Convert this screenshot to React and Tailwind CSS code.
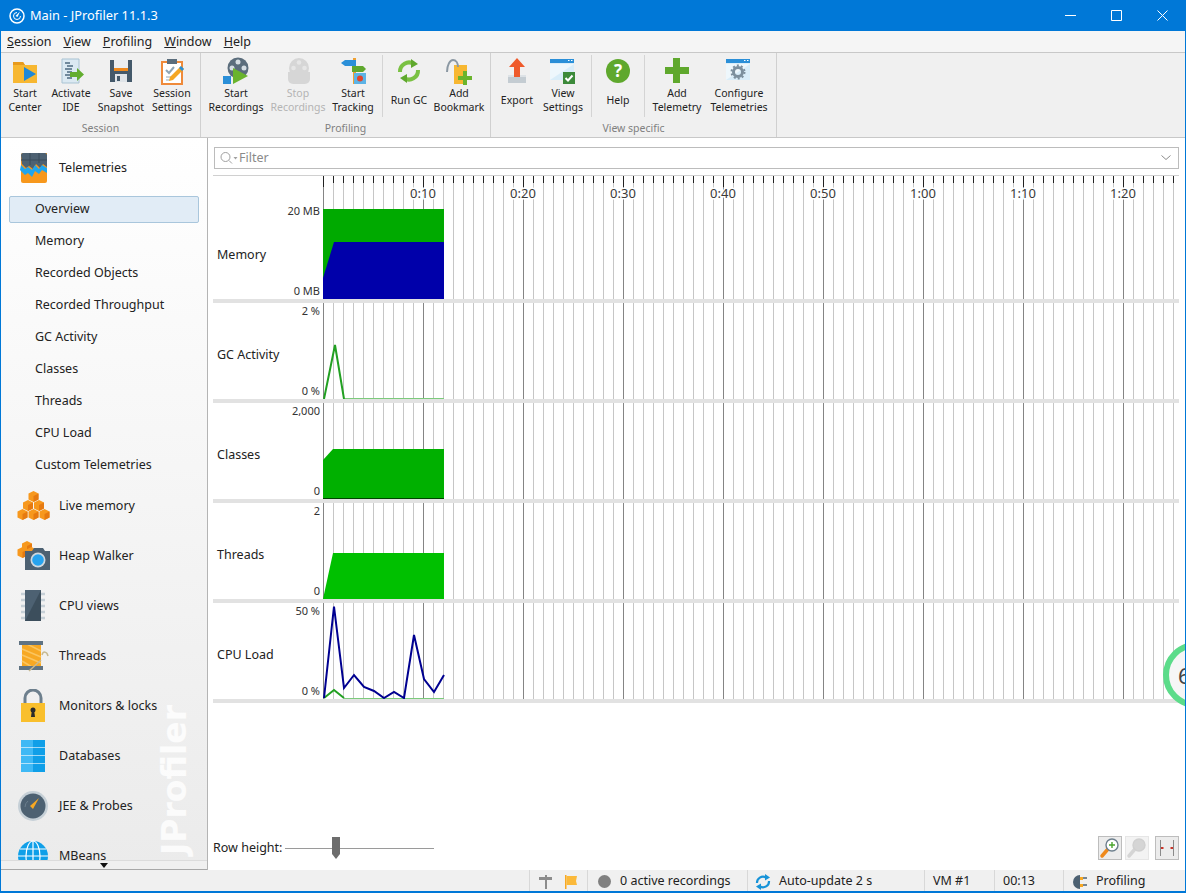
import React from 'react';

const FONT = '"Noto Sans", "Liberation Sans", sans-serif';

/* toolbar icons */
const StartCenterIcon = () => (
  <svg width="28" height="28" viewBox="0 0 28 28">
    <path d="M2 5h10l2 3h12v18H2z" fill="#f7b731" />
    <path d="M2 5h10l2 3H2z" fill="#e89a1c" />
    <path d="M13 10v14l12-7z" fill="#1e88d8" />
  </svg>
);
const ActivateIdeIcon = () => (
  <svg width="28" height="28" viewBox="0 0 28 28">
    <path d="M5 2h17v24H5z" fill="#dbe9f2" stroke="#a9c3d3" />
    <path d="M8 6h5M10 9h6M8 12h7M10 15h5M8 18h6M10 21h5" stroke="#4d6a80" strokeWidth="1.6" />
    <path d="M13 15h7v-4l7 6.500-7 6.500v-4h-7z" fill="#62ad2f" />
  </svg>
);
const SaveIcon = () => (
  <svg width="28" height="28" viewBox="0 0 28 28">
    <path d="M3 3h22v22H3z" fill="#44596a" />
    <path d="M7 3h14v11H7z" fill="#e9edf0" />
    <path d="M7 11h14v3H7z" fill="#ef8a1d" />
    <path d="M8 17h12v8H8z" fill="#dfe4e8" />
    <path d="M10 19h3v5h-3z" fill="#44596a" />
  </svg>
);
const SessionSettingsIcon = () => (
  <svg width="28" height="28" viewBox="0 0 28 28">
    <path d="M4 5h20v22H4z" fill="#fff" stroke="#ef8a3a" strokeWidth="2" />
    <path d="M9 2h10v5H9z" fill="#5b6d7c" />
    <path d="M8 13l3 3 5-6" fill="none" stroke="#8fa5b5" strokeWidth="2" />
    <path d="M8 20h7M8 23h4" stroke="#b9c6d0" strokeWidth="1.500" />
    <path d="M23 9l3 3-11 11-4 1 1-4z" fill="#f5a623" />
    <path d="M23 9l3 3-2 2-3-3z" fill="#2a8fd8" />
  </svg>
);
const StartRecIcon = () => (
  <svg width="28" height="28" viewBox="0 0 28 28">
    <circle cx="16" cy="11" r="10.500" fill="#5b6d7c" />
    <circle cx="16" cy="5" r="2.500" fill="#d5dde3" />
    <circle cx="10" cy="11" r="2.500" fill="#d5dde3" />
    <circle cx="22" cy="11" r="2.500" fill="#d5dde3" />
    <circle cx="16" cy="17" r="2.500" fill="#d5dde3" />
    <path d="M1 19h8v8H1z" fill="#2a8fd8" />
    <path d="M11 11v16l15-8z" fill="#6ab42d" />
  </svg>
);
const StopRecIcon = () => (
  <svg width="28" height="28" viewBox="0 0 28 28">
    <circle cx="15" cy="11" r="10" fill="#d6d6d6" />
    <circle cx="15" cy="5.500" r="2.300" fill="#e6e6e6" />
    <circle cx="9.500" cy="11" r="2.300" fill="#e6e6e6" />
    <circle cx="20.500" cy="11" r="2.300" fill="#e6e6e6" />
    <path d="M4 15h22v7a5 5 0 0 1-5 5H9a5 5 0 0 1-5-5z" fill="#d6d6d6" />
  </svg>
);
const TrackingIcon = () => (
  <svg width="28" height="28" viewBox="0 0 28 28">
    <path d="M14 1h3v26h-3z" fill="#f0a030" />
    <path d="M2 6l4-3h11v6H6z" fill="#2a8fd8" />
    <path d="M13 9h11l3 3-3 3H13z" fill="#5fa82d" />
    <path d="M15 16h12v11H15z" fill="#5cb3e6" />
    <circle cx="21" cy="21.500" r="3" fill="#e0452c" />
  </svg>
);
const RunGcIcon = () => (
  <svg width="28" height="28" viewBox="0 0 28 28">
    <path d="M5 15a9 9 0 0 1 14-8" fill="none" stroke="#7ac142" strokeWidth="4" />
    <path d="M16 2l7 5-7 4z" fill="#5fa82d" />
    <path d="M23 13a9 9 0 0 1-14 8" fill="none" stroke="#7ac142" strokeWidth="4" />
    <path d="M12 26l-7-5 7-4z" fill="#5fa82d" />
  </svg>
);
const BookmarkIcon = () => (
  <svg width="28" height="28" viewBox="0 0 28 28">
    <path d="M9 8h13v19H9z" fill="#f7b731" />
    <path d="M2 15c0-7 3-12 6-12s5 3 5 7" fill="none" stroke="#8b98a3" strokeWidth="2" />
    <path d="M18 14h4v5h5v4h-5v5h-4v-5h-5v-4h5z" fill="#6ab42d" />
  </svg>
);
const ExportIcon = () => (
  <svg width="28" height="28" viewBox="0 0 28 28">
    <path d="M5 18h18v8H5z" fill="#c4ccd2" />
    <path d="M5 18h18v2H5z" fill="#dde2e6" />
    <path d="M14 1l8 9h-5v10h-6V10H6z" fill="#ef5a2b" />
  </svg>
);
const WindowBase = ({ children }) => (
  <svg width="28" height="28" viewBox="0 0 28 28">
    <path d="M1 2h24v21H1z" fill="#d9edf9" />
    <path d="M1 7L25 7 1 23z" fill="#eef7fc" />
    <path d="M1 2h24v4H1z" fill="#2a8fd8" />
    <path d="M19 3.500h1.500M22 3.500h1.500" stroke="#fff" />
    {children}
  </svg>
);
const ViewSettingsIcon = () => (
  <WindowBase>
    <path d="M14 15h12v12H14z" fill="#3c8a3a" />
    <path d="M16.500 21l2.500 2.500 4.500-5" fill="none" stroke="#fff" strokeWidth="2" />
  </WindowBase>
);
const HelpIcon = () => (
  <svg width="28" height="28" viewBox="0 0 28 28">
    <circle cx="14" cy="14" r="12" fill="#5fa82d" />
    <text x="14" y="20" textAnchor="middle" fontSize="17" fontWeight="700" fill="#fff" fontFamily={FONT}>?</text>
  </svg>
);
const PlusIcon = () => (
  <svg width="28" height="28" viewBox="0 0 28 28">
    <path d="M11 2h7v9h9v7h-9v9h-7v-9H3v-7h8z" fill="#5fa82d" transform="translate(-1 -1)" />
  </svg>
);
const ConfigureIcon = () => (
  <WindowBase>
    <circle cx="13" cy="15" r="4.500" fill="none" stroke="#7c8f9d" strokeWidth="3" />
    <circle cx="13" cy="15" r="6.500" fill="none" stroke="#7c8f9d" strokeWidth="2" strokeDasharray="2 2.100" />
  </WindowBase>
);

/* sidebar icons */
const TelemetriesIcon = () => (
  <svg width="32" height="32" viewBox="0 0 32 32">
    <path d="M3 3a2 2 0 0 1 2-2h24v28a2 2 0 0 1-2 2H5a2 2 0 0 1-2-2z" fill="#f7981d" />
    <path d="M3 3a2 2 0 0 1 2-2h22a2 2 0 0 1 2 2v12l-4-3-3 4-4-4-3 5-4-3-3 2-4-4z" fill="#4d6172" />
    <path d="M3 13l4 4 3-2 4 3 3-5 4 4 3-4 5 3v5l-5-3-3 4-4-3-3 6-4-4-3 2-5-5z" fill="#1fa5ee" />
    <path d="M12 1v12M21 1v10M3 8h26" stroke="#3b4c5a" strokeWidth="1" />
  </svg>
);
const Cube = ({ x, y }) => (
  <g transform={`translate(${x} ${y})`}>
    <path d="M5 0l5 2.500v6L5 11 0 8.500v-6z" fill="#f7981d" />
    <path d="M5 5l5-2.500v6L5 11z" fill="#e67a10" />
  </g>
);
const CubesIcon = () => (
  <svg width="34" height="32" viewBox="0 0 34 32">
    <Cube x="11.500" y="1" />
    <Cube x="6" y="10" />
    <Cube x="17" y="10" />
    <Cube x="0.500" y="19" />
    <Cube x="11.500" y="19" />
    <Cube x="22.500" y="19" />
  </svg>
);
const CameraIcon = () => (
  <svg width="34" height="32" viewBox="0 0 34 32">
    <Cube x="0.500" y="7" />
    <Cube x="5" y="1" />
    <Cube x="9.500" y="7" />
    <path d="M8 11h7l2-3h9l2 3h5v19H8z" fill="#4d6172" />
    <circle cx="21" cy="20" r="7.500" fill="#cfd8df" />
    <circle cx="21" cy="20" r="5.800" fill="#27a3ee" />
  </svg>
);
const ChipIcon = () => (
  <svg width="32" height="34" viewBox="0 0 32 34">
    <path d="M4 5h24M4 11h24M4 17h24M4 23h24M4 29h24" stroke="#c6d0d7" strokeWidth="2.500" />
    <path d="M8 1h16v31H8z" fill="#4d6172" />
    <path d="M24 1v31H8z" fill="#3c4e5c" />
  </svg>
);
const SpoolIcon = () => (
  <svg width="32" height="32" viewBox="0 0 32 32">
    <path d="M5 4h19v24H5z" fill="#f7a823" />
    <path d="M5 9l19 8M5 15l19 8M5 21l10 6M10 4l14 7" stroke="#fbc55f" strokeWidth="1.500" />
    <path d="M2 1h24v4H2zM2 26h24v4H2z" fill="#5f7383" />
    <path d="M31 16c-1-5-5-5-6-1M24 20L12 31" fill="none" stroke="#c7b990" strokeWidth="1.500" />
  </svg>
);
const LockIcon = () => (
  <svg width="32" height="34" viewBox="0 0 32 34">
    <path d="M8 15V9a8 8 0 0 1 16 0v6" fill="none" stroke="#6d7f8d" strokeWidth="3" />
    <path d="M4 14h24v19H4z" fill="#f9bf2c" />
    <circle cx="16" cy="21" r="2.500" fill="#2b2b2b" />
    <path d="M14.800 22h2.400l.8 6h-4z" fill="#2b2b2b" />
  </svg>
);
const DatabaseIcon = () => (
  <svg width="32" height="32" viewBox="0 0 32 32">
    <path d="M4 0h24v32H4z" fill="#0f9fe8" />
    <path d="M4 0h12v32H4z" fill="#3fb9f5" />
    <path d="M4 7.500h24M4 15.500h24M4 23.500h24" stroke="#fff" strokeWidth="1" opacity="0.600" />
  </svg>
);
const GaugeIcon = () => (
  <svg width="32" height="32" viewBox="0 0 32 32">
    <circle cx="16" cy="16" r="15" fill="#c6d0d7" />
    <circle cx="16" cy="16" r="12.500" fill="#4d6172" />
    <path d="M22 8l-6 11-3-3z" fill="#f7a823" />
    <path d="M8 17a8 8 0 0 1 3-6" fill="none" stroke="#6c7f8e" strokeWidth="1" />
  </svg>
);
const GlobeIcon = () => (
  <svg width="32" height="32" viewBox="0 0 32 32">
    <circle cx="16" cy="16" r="15" fill="#0f9fe8" />
    <path d="M1 16h30M3 9h26M3 23h26M16 1v30" stroke="#fff" strokeWidth="1.200" />
    <ellipse cx="16" cy="16" rx="7" ry="15" fill="none" stroke="#fff" strokeWidth="1.200" />
  </svg>
);

/* small status bar + zoom icons */
const SignpostSmall = () => (
  <svg width="16" height="16" viewBox="0 0 16 16">
    <path d="M7 1h2v14H7z" fill="#8c8c8c" />
    <path d="M1 3h13v3H1z" fill="#8c8c8c" />
  </svg>
);
const FlagSmall = () => (
  <svg width="16" height="16" viewBox="0 0 16 16">
    <path d="M2 1h1.500v14H2z" fill="#f7a823" />
    <path d="M3.500 2H14l-1 5 1 4H3.500z" fill="#fbb93a" />
  </svg>
);
const RefreshSmall = () => (
  <svg width="18" height="18" viewBox="0 0 18 18">
    <path d="M3 10a6 6 0 0 1 9-5.500" fill="none" stroke="#1793d8" strokeWidth="2.200" />
    <path d="M11 1l5 3.500-5 3z" fill="#1793d8" />
    <path d="M15 8a6 6 0 0 1-9 5.500" fill="none" stroke="#1793d8" strokeWidth="2.200" />
    <path d="M7 17l-5-3.500 5-3z" fill="#1793d8" />
  </svg>
);
const PlugSmall = () => (
  <svg width="18" height="16" viewBox="0 0 18 16">
    <path d="M9 1a7 7 0 0 0 0 14z" fill="#4d6172" />
    <path d="M9 3h3v3H9z M9 10h3v3H9z" fill="#f7a823" />
    <path d="M12 4h4M12 11h4" stroke="#4d6172" strokeWidth="1.500" />
  </svg>
);
const ZoomInIcon = ({ dim }) => (
  <svg width="22" height="22" viewBox="0 0 22 22">
    <path d="M9 12L3 19" stroke={dim ? '#d5d5d5' : '#ef8a1d'} strokeWidth="3.500" strokeLinecap="round" />
    <circle cx="13" cy="8" r="6" fill={dim ? '#d5d5d5' : '#fff'} stroke={dim ? '#d0d0d0' : '#6d7f8d'} strokeWidth="1.400" />
    {!dim && <path d="M10 8h6M13 5v6" stroke="#4aa52e" strokeWidth="1.400" />}
  </svg>
);
const FitIcon = () => (
  <svg width="22" height="22" viewBox="0 0 22 22">
    <path d="M4.500 3v16M17.500 3v16" stroke="#8a8a8a" />
    <path d="M5 11h2.500M14.500 11h2.500" stroke="#c9362b" strokeWidth="2" />
  </svg>
);

const Separator = ({ className }) => <div className={`w-px bg-[#d4d4d4] ${className}`} />;

const ToolButton = ({ width, lines, icon, disabled }) => (
  <div className={`flex flex-col items-center pt-[4px] ${width}`}>
    {icon}
    <div className={`mt-[1px] h-[28px] flex flex-col justify-center items-center text-[10.5px] leading-[14px] whitespace-nowrap ${disabled ? 'text-[#b4b4b4]' : 'text-[#222]'}`}>
      {lines.map(line => <span key={line}>{line}</span>)}
    </div>
  </div>
);

const ToolGroup = ({ label, width, className, children }) => (
  <div className={`flex flex-col h-full border-r border-[#d0d0d0] ${width}`}>
    <div className={`flex h-[64px] ${className}`}>{children}</div>
    <div className="flex-1 pt-[4px] flex items-center justify-center text-[10.5px] text-[#808080]">{label}</div>
  </div>
);

const MENUS = ['Session', 'View', 'Profiling', 'Window', 'Help'];

const TELEMETRY_ITEMS = ['Overview', 'Memory', 'Recorded Objects', 'Recorded Throughput', 'GC Activity', 'Classes', 'Threads', 'CPU Load', 'Custom Telemetries'];

const SECTIONS = [
  { name: 'Live memory', icon: <CubesIcon /> },
  { name: 'Heap Walker', icon: <CameraIcon /> },
  { name: 'CPU views', icon: <ChipIcon /> },
  { name: 'Threads', icon: <SpoolIcon /> },
  { name: 'Monitors & locks', icon: <LockIcon /> },
  { name: 'Databases', icon: <DatabaseIcon /> },
  { name: 'JEE & Probes', icon: <GaugeIcon /> },
  { name: 'MBeans', icon: <GlobeIcon /> },
];

const Sidebar = () => (
  <div className="relative w-[207px] flex flex-col border-r border-[#b4b4b4] bg-gradient-to-b from-white to-[#ebebeb]">
    <div className="flex-1 overflow-hidden">
      <div className="h-[54px] pt-[6px] pl-[17px] flex items-center gap-[9px]">
        <TelemetriesIcon />
        <span>Telemetries</span>
      </div>
      {TELEMETRY_ITEMS.map((item, i) => (
        <div key={item} className="h-[32px] pt-[2px] flex items-center">
          {i === 0 ? (
            <div className="ml-[8px] w-[190px] h-[27px] pl-[25px] flex items-center bg-[#e1ecf6] border border-[#a9c6dc] rounded-[2px]">{item}</div>
          ) : (
            <span className="pl-[34px]">{item}</span>
          )}
        </div>
      ))}
      {SECTIONS.map(section => (
        <div key={section.name} className="h-[50px] pt-[2px] flex items-center">
          <div className="w-[58px] pl-[16px] flex items-center">{section.icon}</div>
          <span>{section.name}</span>
        </div>
      ))}
    </div>
    <div className="h-[10px] flex justify-center bg-[#f0f0f0] border-t border-b border-[#dcdcdc] border-b-[#a8a8a8]">
      <svg width="10" height="8" viewBox="0 0 10 8"><path d="M1 2h8L5 7z" fill="#111" /></svg>
    </div>
    <div className="absolute left-[84px] top-[622px] w-[180px] h-[40px] rotate-[-90deg] flex items-center justify-center font-['DejaVu_Sans'] text-[33px] leading-[40px] font-bold text-white/80 select-none whitespace-nowrap">JProfiler</div>
  </div>
);

const GRID_X = Array.from({ length: 86 }, (_, i) => i * 10);

const GridLines = ({ height }) => (
  <>
    {GRID_X.map(x => (
      <line key={x} x1={x + 0.5} x2={x + 0.5} y1="0" y2={height} stroke={x % 100 === 0 ? '#858585' : '#c6c6c6'} />
    ))}
  </>
);

const Ruler = () => (
  <svg width="856" height="27" className="block">
    <GridLines height={27} />
    {GRID_X.map(x => (
      <line key={x} x1={x + 0.5} x2={x + 0.5} y1="0" y2={x % 100 === 0 ? 11 : 7} stroke="#222" />
    ))}
    {GRID_X.filter(x => x > 0 && x % 100 === 0).map(x => (
      <text key={x} x={x} y="21.500" textAnchor="middle" fontSize="13" fill="#3a3a3a" stroke="#fff" strokeWidth="3" paintOrder="stroke" fontFamily={FONT}>
        {`${Math.floor(x / 600)}:${String((x / 10) % 60).padStart(2, '0')}`}
      </text>
    ))}
  </svg>
);

const TelemetryRow = ({ name, top, bottom, children }) => (
  <div className="flex flex-col">
    <div className="flex h-[96px]">
      <div className="relative w-[110px] flex items-center pt-[8px] pl-[4px]">
        <span>{name}</span>
        <span className="absolute right-[3px] top-0 text-[11px] leading-[16px] text-[#333]">{top}</span>
        <span className="absolute right-[3px] bottom-0 text-[11px] leading-[16px] text-[#333]">{bottom}</span>
      </div>
      <svg width="856" height="96" className="block">
        <GridLines height={96} />
        {children}
      </svg>
    </div>
    <div className="h-[4px] bg-[#e2e2e2]" />
  </div>
);

const StatusCell = ({ width, children }) => (
  <div className={`h-full pt-[2px] flex items-center border-l border-[#d8d8d8] ${width}`}>{children}</div>
);

const App = () => (
  <div className="w-screen h-screen overflow-hidden flex flex-col relative bg-white text-[12.5px] text-[#222] border-x border-b-2 border-[#0078d7]" style={{ fontFamily: FONT }}>
    {/* Title bar */}
    <div className="h-[31px] shrink-0 bg-[#0078d7] flex items-center text-white -mx-px">
      <svg width="16" height="16" viewBox="0 0 16 16" className="ml-[9px]">
        <circle cx="8" cy="8" r="7" fill="none" stroke="#fff" strokeWidth="1.500" />
        <path d="M11 3.500L8.500 9 6.500 8z" fill="#fff" />
        <path d="M8 4.500a3.500 3.500 0 1 0 3.500 3.500" fill="none" stroke="#fff" />
      </svg>
      <span className="ml-[5px] text-[12.8px]">Main - JProfiler 11.1.3</span>
      <div className="ml-auto mr-[1px] flex items-center">
        <div className="w-[46px] flex justify-center">
          <svg width="11" height="11" viewBox="0 0 11 11"><path d="M0 5.500h11" stroke="#fff" /></svg>
        </div>
        <div className="w-[46px] flex justify-center">
          <svg width="11" height="11" viewBox="0 0 11 11"><path d="M.5.500h10v10H.5z" fill="none" stroke="#fff" /></svg>
        </div>
        <div className="w-[46px] flex justify-center">
          <svg width="11" height="11" viewBox="0 0 11 11"><path d="M.5.500l10 10M10.500.500l-10 10" stroke="#fff" /></svg>
        </div>
      </div>
    </div>

    {/* Menu bar */}
    <div className="h-[22px] shrink-0 flex items-center gap-[12px] pl-[6px] pt-px bg-[#f5f5f5] border-b border-[#c8c8c8]">
      {MENUS.map(menu => (
        <span key={menu}><span className="underline">{menu[0]}</span>{menu.slice(1)}</span>
      ))}
    </div>

    {/* Toolbar */}
    <div className="h-[85px] shrink-0 flex bg-[#f0f0f0] border-b border-[#c8c8c8]">
      <ToolGroup label="Session" width="w-[200px]" className="pl-[2px]">
        <ToolButton width="w-[44px]" lines={['Start', 'Center']} icon={<StartCenterIcon />} />
        <ToolButton width="w-[48px]" lines={['Activate', 'IDE']} icon={<ActivateIdeIcon />} />
        <ToolButton width="w-[52px]" lines={['Save', 'Snapshot']} icon={<SaveIcon />} />
        <ToolButton width="w-[50px]" lines={['Session', 'Settings']} icon={<SessionSettingsIcon />} />
      </ToolGroup>
      <ToolGroup label="Profiling" width="w-[290px]" className="pl-[5px]">
        <ToolButton width="w-[60px]" lines={['Start', 'Recordings']} icon={<StartRecIcon />} />
        <ToolButton width="w-[64px]" lines={['Stop', 'Recordings']} icon={<StopRecIcon />} disabled />
        <ToolButton width="w-[46px]" lines={['Start', 'Tracking']} icon={<TrackingIcon />} />
        <Separator className="ml-[6px] mr-[5px] h-[62px] mt-[2px]" />
        <ToolButton width="w-[42px]" lines={['Run GC']} icon={<RunGcIcon />} />
        <ToolButton width="w-[58px]" lines={['Add', 'Bookmark']} icon={<BookmarkIcon />} />
      </ToolGroup>
      <ToolGroup label="View specific" width="w-[286px]" className="pl-[6px]">
        <ToolButton width="w-[40px]" lines={['Export']} icon={<ExportIcon />} />
        <ToolButton width="w-[52px]" lines={['View', 'Settings']} icon={<ViewSettingsIcon />} />
        <Separator className="ml-[2px] mr-[1px] h-[62px] mt-[2px]" />
        <ToolButton width="w-[50px]" lines={['Help']} icon={<HelpIcon />} />
        <Separator className="mx-[1px] h-[62px] mt-[2px]" />
        <ToolButton width="w-[62px]" lines={['Add', 'Telemetry']} icon={<PlusIcon />} />
        <ToolButton width="w-[62px]" lines={['Configure', 'Telemetries']} icon={<ConfigureIcon />} />
      </ToolGroup>
    </div>

    {/* Body */}
    <div className="flex-1 min-h-0 flex">
      <Sidebar />
      <div className="flex-1 min-w-0 flex flex-col pl-[5px] pr-[6px] pt-[9px] pb-[10px]">
        <div className="ml-px h-[22px] shrink-0 flex items-center px-[4px] border border-[#bcbcbc]">
          <svg width="20" height="14" viewBox="0 0 20 14">
            <circle cx="6.500" cy="6" r="4.500" fill="none" stroke="#a0a0a0" />
            <path d="M10 9.500l3 3" stroke="#a0a0a0" />
            <path d="M14.500 6h4l-2 2.500z" fill="#a0a0a0" />
          </svg>
          <span className="text-[#8a8a8a]">Filter</span>
          <svg width="12" height="8" viewBox="0 0 12 8" className="ml-auto mr-[2px]"><path d="M1.500 1.500l4.500 4 4.500-4" fill="none" stroke="#8c8c8c" /></svg>
        </div>
        <div className="mt-[6px] shrink-0 border-t border-[#d0d0d0] flex pl-[110px]">
          <Ruler />
        </div>
        <div className="shrink-0">
          <TelemetryRow name="Memory" top="20 MB" bottom="0 MB">
            <path d="M0 6H121V96H0z" fill="#00aa00" />
            <path d="M0 75L11 39H121V96H0z" fill="#0000aa" />
          </TelemetryRow>
          <TelemetryRow name="GC Activity" top="2 %" bottom="0 %">
            <path d="M121 95.500H21" stroke="#7ccb7c" fill="none" />
            <path d="M1 96L12 42 21 96" stroke="#22a022" strokeWidth="2" fill="none" />
          </TelemetryRow>
          <TelemetryRow name="Classes" top="2,000" bottom="0">
            <path d="M0 57L10 46H121V95H0z" fill="#00b000" />
            <path d="M0 95.500H121" stroke="#004400" />
          </TelemetryRow>
          <TelemetryRow name="Threads" top="2" bottom="0">
            <path d="M0 96L10 50H121V96z" fill="#00c000" />
          </TelemetryRow>
          <TelemetryRow name="CPU Load" top="50 %" bottom="0 %">
            <path d="M21 95.500H121" stroke="#7ccb7c" fill="none" />
            <path d="M1 95L11 87 21 95" stroke="#22a022" strokeWidth="2" fill="none" />
            <path d="M1 95L11 3.500 21 85 31 72 41 84 51 88 61 95 71 89 81 95 91 32 101 76 111 89 121 72" stroke="#000090" strokeWidth="2" fill="none" />
          </TelemetryRow>
        </div>
        <div className="mt-auto h-[24px] shrink-0 flex items-center">
          <span>Row height:</span>
          <div className="relative ml-[3px] w-[149px] h-px bg-[#9a9a9a]">
            <svg width="10" height="22" viewBox="0 0 10 22" className="absolute left-[46px] top-[-11px]">
              <path d="M1 0h8v17l-4 5-4-5z" fill="#6d6d6d" />
            </svg>
          </div>
          <div className="ml-auto flex items-center">
            <div className="w-[24px] h-[24px] flex items-center justify-center bg-[#ececec] border border-[#bdbdbd]"><ZoomInIcon /></div>
            <div className="ml-[3px] w-[24px] h-[24px] flex items-center justify-center bg-[#f3f3f3] border border-[#e6e6e6]"><ZoomInIcon dim /></div>
            <div className="ml-[6px] w-[24px] h-[24px] flex items-center justify-center bg-[#ececec] border border-[#bdbdbd]"><FitIcon /></div>
          </div>
        </div>
      </div>
    </div>

    {/* Status bar */}
    <div className="h-[21px] shrink-0 flex justify-end bg-[#f0f0f0] text-[12.5px] whitespace-nowrap">
      <StatusCell width="w-[58px]">
        <div className="ml-[8px] flex gap-[9px]"><SignpostSmall /><FlagSmall /></div>
      </StatusCell>
      <StatusCell width="w-[160px]">
        <div className="ml-[10px] w-[13px] h-[13px] rounded-full bg-[#808080]" />
        <span className="ml-[9px]">0 active recordings</span>
      </StatusCell>
      <StatusCell width="w-[177px]">
        <div className="ml-[6px] flex"><RefreshSmall /></div>
        <span className="ml-[7px]">Auto-update 2 s</span>
      </StatusCell>
      <StatusCell width="w-[70px]"><span className="ml-[8px]">VM #1</span></StatusCell>
      <StatusCell width="w-[69px]"><span className="ml-[8px]">00:13</span></StatusCell>
      <StatusCell width="w-[122px]">
        <div className="ml-[7px] flex"><PlugSmall /></div>
        <span className="ml-[7px]">Profiling</span>
      </StatusCell>
    </div>

    {/* floating badge at the right edge */}
    <div className="absolute right-[-44px] top-[642px] w-[66px] h-[66px] rounded-full bg-[#f6f6f6] border-[6px] border-[#5cdc8a] flex items-center pl-[9px] text-[22px] text-[#444]">6</div>
  </div>
);

export default App;
